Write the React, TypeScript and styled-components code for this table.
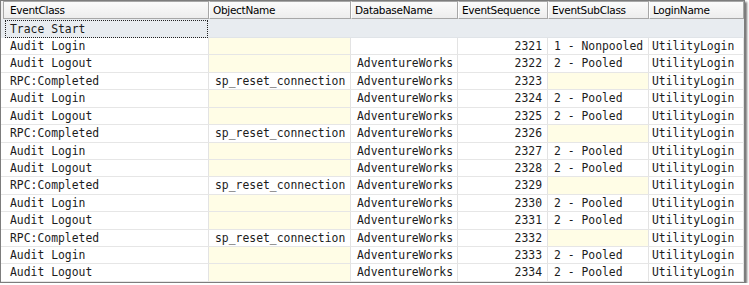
import React from "react";
import styled, { createGlobalStyle } from "styled-components";

const GlobalStyle = createGlobalStyle`
  html, body {
    margin: 0;
    padding: 0;
    background: #ffffff;
  }
`;

const COLS = "208px 142px 107px 90px 101px 95px";

const Frame = styled.div`
  width: 743px;
  height: 281px;
  border: 1px solid #7d7d7d;
  box-shadow: 2px 2px 2px rgba(0, 0, 0, 0.55);
  background: #ffffff;
  overflow: hidden;
`;

const HeaderRow = styled.div`
  display: grid;
  grid-template-columns: ${COLS};
  height: 18px;
  background: #f0f0f0;
`;

const HeaderCell = styled.div<{ $first?: boolean }>`
  box-sizing: border-box;
  height: 18px;
  margin-left: ${({ $first }) => ($first ? "2px" : "0")};
  padding-left: ${({ $first }) => ($first ? "6px" : "3px")};
  border: 1px solid #a7a7a7;
  border-left-color: ${({ $first }) => ($first ? "#a7a7a7" : "#ffffff")};
  background: linear-gradient(#fbfbfb, #ededed);
  font-family: "DejaVu Sans", sans-serif;
  font-size: 10.5px;
  letter-spacing: -0.3px;
  line-height: 16px;
  color: #000000;
  white-space: nowrap;
  overflow: hidden;
`;

const Row = styled.div<{ $trace?: boolean }>`
  display: grid;
  grid-template-columns: ${COLS};
  height: ${({ $trace }) => ($trace ? "19px" : "17.43px")};
  background: ${({ $trace }) => ($trace ? "#e8ecf0" : "#ffffff")};
`;

const Cell = styled.div<{ $empty?: boolean; $align?: "left" | "right"; $pad?: number }>`
  box-sizing: border-box;
  border-right: 1px solid #e3e3e3;
  border-bottom: 1px solid #e6e6e6;
  background: ${({ $empty }) => ($empty ? "#fffde6" : "transparent")};
  padding: 0 5px 0 ${({ $pad }) => $pad ?? 5}px;
  text-align: ${({ $align }) => $align ?? "left"};
  font-family: "DejaVu Sans Mono", monospace;
  font-size: 11.4px;
  line-height: 17px;
  color: #1c1c1c;
  white-space: nowrap;
  overflow: hidden;
`;

const FocusCell = styled.div`
  box-sizing: border-box;
  margin: 1px 1px 0 4px;
  border: 1px dotted #222222;
  padding-left: 4px;
  font-family: "DejaVu Sans Mono", monospace;
  font-size: 11.4px;
  line-height: 16px;
  color: #1c1c1c;
`;

const TraceBlank = styled.div`
  border-bottom: 1px solid #e0e4e8;
`;

type Entry = {
  cls: string;
  obj: string | null;
  db: string;
  seq: number;
  sub: string | null;
};

const LOGIN: Entry = { cls: "Audit Login", obj: null, db: "AdventureWorks", seq: 0, sub: "2 - Pooled" };
const LOGOUT: Entry = { cls: "Audit Logout", obj: null, db: "AdventureWorks", seq: 0, sub: "2 - Pooled" };
const RPC: Entry = { cls: "RPC:Completed", obj: "sp_reset_connection", db: "AdventureWorks", seq: 0, sub: null };

const pattern: Entry[] = [
  { ...LOGIN, db: "", sub: "1 - Nonpooled" },
  LOGOUT,
  RPC,
  LOGIN,
  LOGOUT,
  RPC,
  LOGIN,
  LOGOUT,
  RPC,
  LOGIN,
  LOGOUT,
  RPC,
  LOGIN,
  LOGOUT,
];

const rows = pattern.map((e, i) => ({ ...e, seq: 2321 + i }));

const headers = ["EventClass", "ObjectName", "DatabaseName", "EventSequence", "EventSubClass", "LoginName"];

export default function App() {
  return (
    <>
      <GlobalStyle />
      <Frame>
        <HeaderRow>
          {headers.map((h, i) => (
            <HeaderCell key={h} $first={i === 0}>
              {h}
            </HeaderCell>
          ))}
        </HeaderRow>
        <Row $trace>
          <FocusCell>Trace Start</FocusCell>
          <TraceBlank />
          <TraceBlank />
          <TraceBlank />
          <TraceBlank />
          <TraceBlank />
        </Row>
        {rows.map((r) => (
          <Row key={r.seq}>
            <Cell $pad={9}>{r.cls}</Cell>
            <Cell $empty={r.obj === null} $pad={6}>
              {r.obj}
            </Cell>
            <Cell $pad={6}>{r.db}</Cell>
            <Cell $align="right">{r.seq}</Cell>
            <Cell $empty={r.sub === null} $pad={6}>
              {r.sub}
            </Cell>
            <Cell $pad={3}>UtilityLogin</Cell>
          </Row>
        ))}
      </Frame>
    </>
  );
}
